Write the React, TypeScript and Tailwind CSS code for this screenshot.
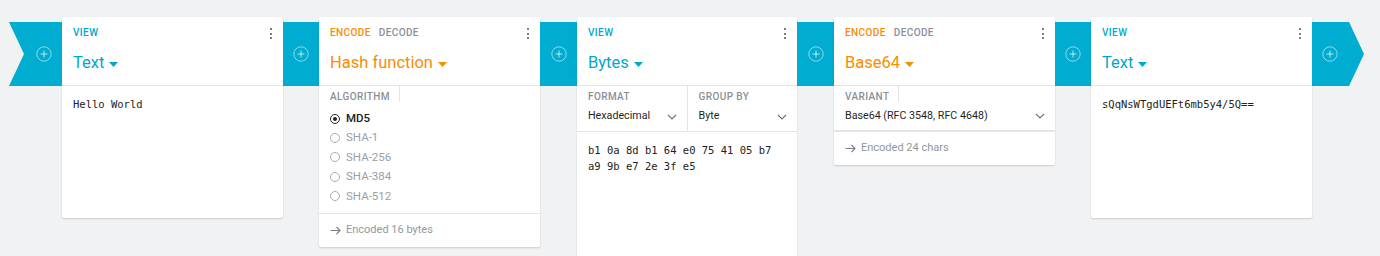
import type { ReactNode } from 'react';

const TEAL = 'bg-[#00acd0]';

function PlusIcon() {
  return (
    <svg width="16" height="16" viewBox="0 0 16 16" fill="none">
      <circle cx="8" cy="8" r="7.2" stroke="rgba(255,255,255,0.55)" strokeWidth="1" />
      <path d="M8 4.5v7M4.5 8h7" stroke="rgba(255,255,255,0.7)" strokeWidth="1" />
    </svg>
  );
}

function Kebab() {
  return (
    <div className="flex flex-col gap-[2.5px] pt-[1px]">
      <span className="block h-[2px] w-[2px] bg-[#7a7f86]" />
      <span className="block h-[2px] w-[2px] bg-[#7a7f86]" />
      <span className="block h-[2px] w-[2px] bg-[#7a7f86]" />
    </div>
  );
}

function Caret({ color }: { color: string }) {
  return (
    <svg width="9" height="5" viewBox="0 0 9 5" className="ml-[5px] mt-[2px]">
      <path d="M0 0h9L4.5 5z" fill={color} />
    </svg>
  );
}

function Chevron() {
  return (
    <svg width="10" height="6" viewBox="0 0 10 6" fill="none">
      <path d="M1 1l4 4 4-4" stroke="#6b7077" strokeWidth="1.1" />
    </svg>
  );
}

function ArrowRight() {
  return (
    <svg width="11" height="9" viewBox="0 0 11 9" fill="none">
      <path d="M0.5 4.5h9.5M6.5 1l3.5 3.5L6.5 8" stroke="#7d8289" strokeWidth="1.2" />
    </svg>
  );
}

function Connector({ w }: { w: string }) {
  return (
    <div className={`${TEAL} ${w} mt-[5px] flex h-[64px] shrink-0 items-center justify-center`}>
      <PlusIcon />
    </div>
  );
}

const labelCls = 'text-[10px] font-medium tracking-[0.4px]';

function Header({ mode, title }: { mode: 'view' | 'encode'; title: string }) {
  const orange = mode === 'encode';
  return (
    <div className="flex h-[69px] flex-col border-b border-[#e3e5e8] px-[11px]">
      <div className="flex items-start justify-between pt-[10px]">
        <div className={`flex gap-[8px] leading-[12px] ${labelCls}`}>
          {orange ? (
            <>
              <span className="text-[#fb8c00]">ENCODE</span>
              <span className="text-[#8b9097]">DECODE</span>
            </>
          ) : (
            <span className="text-[#00a9cc]">VIEW</span>
          )}
        </div>
        <Kebab />
      </div>
      <div
        className={`mt-[14px] flex items-center text-[16.5px] leading-[20px] ${
          orange ? 'text-[#fb8c00]' : 'text-[#00a9cc]'
        }`}
      >
        {title}
        <Caret color={orange ? '#fb8c00' : '#00a9cc'} />
      </div>
    </div>
  );
}

function Card({ w, children }: { w: string; children: ReactNode }) {
  return (
    <div className={`${w} shrink-0 rounded-[2px] bg-white shadow-[0_1px_2px_rgba(0,0,0,0.16)]`}>{children}</div>
  );
}

function Label({ children, divider }: { children: ReactNode; divider?: boolean }) {
  return (
    <div className="flex">
      <div
        className={`pl-[11px] pr-[9px] pt-[6px] leading-[10px] text-[#8b9097] ${labelCls} ${
          divider ? 'h-[16px] border-r border-[#e3e5e8]' : ''
        }`}
      >
        {children}
      </div>
    </div>
  );
}

function Footer({ children }: { children: ReactNode }) {
  return (
    <div className="flex h-[34px] items-center gap-[5px] border-t border-[#e3e5e8] px-[11px] text-[11px] text-[#92979e]">
      <ArrowRight />
      {children}
    </div>
  );
}

const mono = "font-['DejaVu_Sans_Mono',monospace] text-[10.5px] leading-[16px] text-[#222]";

const ALGOS = ['MD5', 'SHA-1', 'SHA-256', 'SHA-384', 'SHA-512'];

export default function App() {
  return (
    <div className="h-[256px] w-[1380px] overflow-hidden bg-[#f1f2f4] font-['Roboto',sans-serif]">
      <div className="flex items-start pl-[9px] pt-[17px]">
        {/* Einlauf-Pfeil */}
        <div className="relative mt-[5px] h-[64px] w-[53px] shrink-0">
          <svg width="53" height="64" viewBox="0 0 53 64" className="absolute inset-0">
            <path d="M0 0H53V64H0L15 32z" fill="#00acd0" />
          </svg>
          <div className="absolute left-[27px] top-[24px]">
            <PlusIcon />
          </div>
        </div>

        <Card w="w-[221px]">
          <Header mode="view" title="Text" />
          <div className={`h-[132px] px-[11px] pt-[10px] ${mono}`}>Hello World</div>
        </Card>

        <Connector w="w-[36px]" />

        <Card w="w-[221px]">
          <Header mode="encode" title="Hash function" />
          <Label divider>ALGORITHM</Label>
          <div className="flex flex-col px-[11px] pb-[7px] pt-[7px]">
            {ALGOS.map((a, i) => (
              <div key={a} className="flex h-[19.4px] items-center gap-[6px]">
                <span
                  className={`flex h-[10px] w-[10px] items-center justify-center rounded-full border ${
                    i === 0 ? 'border-[#222]' : 'border-[#a9adb3]'
                  }`}
                >
                  {i === 0 && <span className="h-[4px] w-[4px] rounded-full bg-[#222]" />}
                </span>
                <span className={`text-[11.5px] ${i === 0 ? 'font-medium text-[#222]' : 'text-[#9aa0a6]'}`}>{a}</span>
              </div>
            ))}
          </div>
          <Footer>Encoded 16 bytes</Footer>
        </Card>

        <Connector w="w-[37px]" />

        <Card w="w-[220px]">
          <Header mode="view" title="Bytes" />
          <div className="flex border-b border-[#e3e5e8]">
            {[
              ['FORMAT', 'Hexadecimal'],
              ['GROUP BY', 'Byte'],
            ].map(([l, v], i) => (
              <div key={l} className={`flex-1 ${i === 0 ? 'border-r border-[#e3e5e8]' : ''}`}>
                <div className={`pl-[11px] pt-[6px] leading-[10px] text-[#8b9097] ${labelCls}`}>{l}</div>
                <div className="flex h-[29px] items-center justify-between pl-[11px] pr-[10px] text-[10.7px] text-[#1f1f1f]">
                  {v}
                  <Chevron />
                </div>
              </div>
            ))}
          </div>
          <div className={`h-[160px] px-[11px] pt-[10px] ${mono}`}>
            b1 0a 8d b1 64 e0 75 41 05 b7
            <br />
            a9 9b e7 2e 3f e5
          </div>
        </Card>

        <Connector w="w-[37px]" />

        <Card w="w-[221px]">
          <Header mode="encode" title="Base64" />
          <Label divider>VARIANT</Label>
          <div className="flex h-[29px] items-center justify-between border-b border-[#e3e5e8] pl-[11px] pr-[10px] text-[10.7px] text-[#1f1f1f]">
            Base64 (RFC 3548, RFC 4648)
            <Chevron />
          </div>
          <Footer>Encoded 24 chars</Footer>
        </Card>

        <Connector w="w-[36px]" />

        <Card w="w-[221px]">
          <Header mode="view" title="Text" />
          <div className={`h-[132px] px-[11px] pt-[10px] ${mono}`}>sQqNsWTgdUEFt6mb5y4/5Q==</div>
        </Card>

        {/* Auslauf-Pfeil */}
        <div className="relative mt-[5px] h-[64px] w-[52px] shrink-0">
          <svg width="52" height="64" viewBox="0 0 52 64" className="absolute inset-0">
            <path d="M0 0H37L52 32L37 64H0z" fill="#00acd0" />
          </svg>
          <div className="absolute left-[10px] top-[24px]">
            <PlusIcon />
          </div>
        </div>
      </div>
    </div>
  );
}
